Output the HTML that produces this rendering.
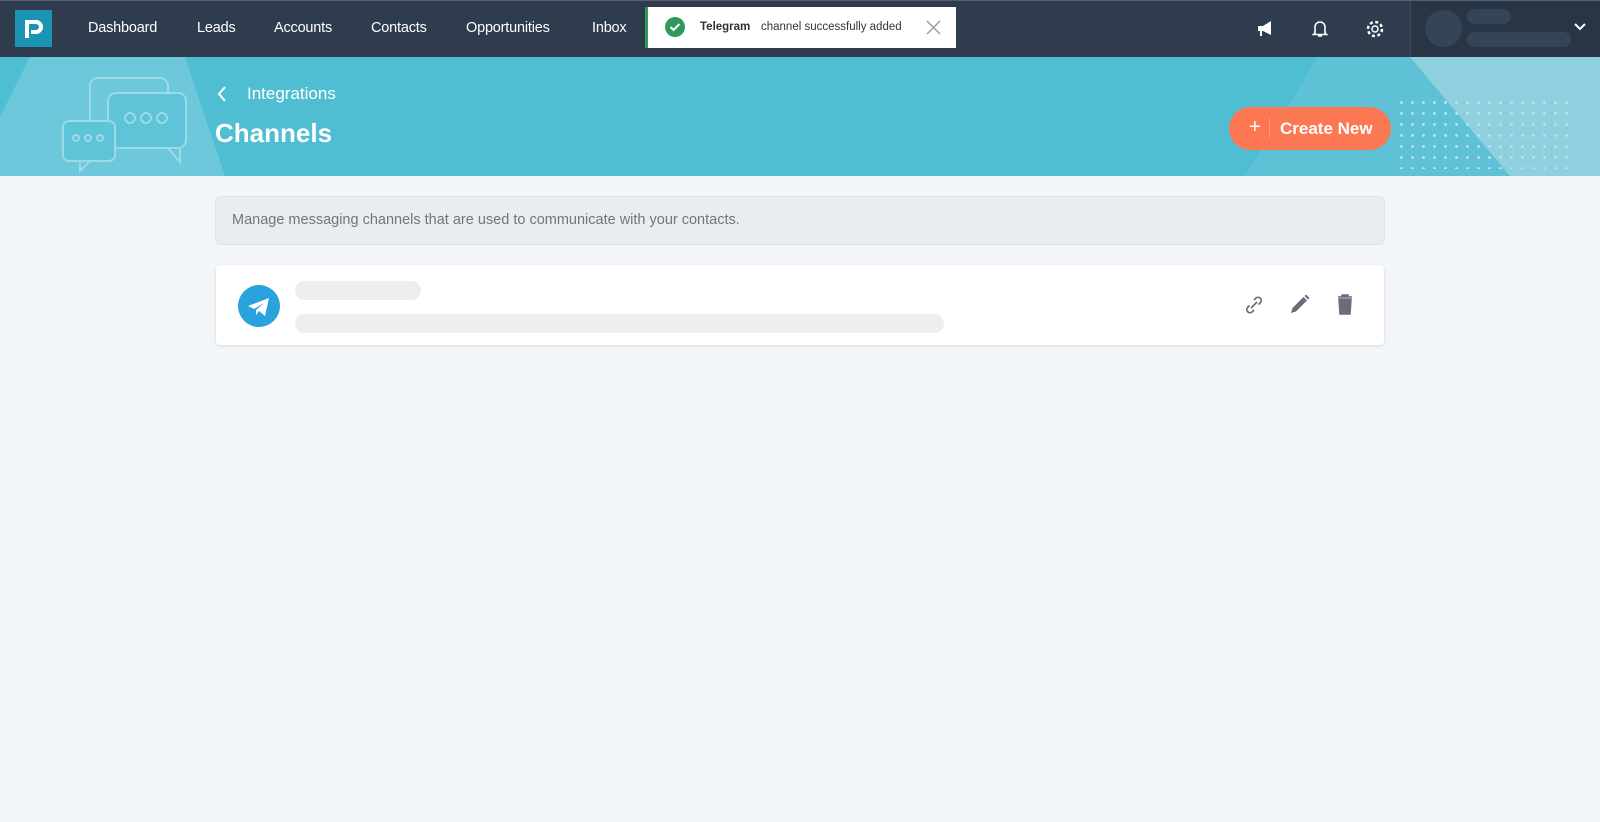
<!DOCTYPE html>
<html><head><meta charset="utf-8"><style>
*{box-sizing:border-box;margin:0;padding:0}
body{width:1600px;height:822px;background:#f2f6f9;font-family:"Liberation Sans",sans-serif;position:relative;overflow:hidden}
.nav{position:absolute;left:0;top:0;width:1600px;height:57px;background:#2e3c4e;border-top:1px solid #55606c}
.nav a{position:absolute;top:19px;color:#fff;font-size:14.5px;letter-spacing:-0.2px}
.logo{position:absolute;left:15px;top:9px;width:37px;height:37px;background:#1b93b3}
.user{position:absolute;left:1410px;top:0;width:190px;height:57px;background:#283545;border-left:1px solid #3e4a59}
.toast{position:absolute;left:645px;top:6px;width:311px;height:41px;background:#fff;border-left:3px solid #2f9a5a;font-size:11.5px;color:#333}
.banner{position:absolute;left:0;top:57px;width:1600px;height:119px;background:#4fbdd2;overflow:hidden}
.desc{position:absolute;left:215px;top:196px;width:1170px;height:49px;background:#e8edf1;border:1px solid #dde3e8;border-radius:6px;color:#70767d;font-size:14.5px;padding:15px 16px}
.card{position:absolute;left:216px;top:265px;width:1168px;height:80px;background:#fff;border-radius:4px;box-shadow:0 1px 3px rgba(0,0,0,.12)}
.sk{position:absolute;background:#eeeeee;border-radius:10px}
</style></head><body>
<div class="nav">
<div class="logo"><svg width="37" height="37"><path d="M12 28V12h9a5 5 0 0 1 0 10h-5" stroke="#fff" stroke-width="4" fill="none"/></svg></div>
<a style="left:88px">Dashboard</a><a style="left:197px">Leads</a><a style="left:274px">Accounts</a><a style="left:371px">Contacts</a><a style="left:466px">Opportunities</a><a style="left:592px">Inbox</a>
<div class="toast"><svg style="position:absolute;left:17px;top:10px" width="20" height="20"><circle cx="10" cy="10" r="10" fill="#2f9a5a"/><path d="M5.5 10l3 3 6-6" stroke="#fff" stroke-width="2" fill="none"/></svg><span style="position:absolute;left:52px;top:14px;font-weight:bold">Telegram</span><span style="position:absolute;left:113px;top:14px">channel successfully added</span><svg style="position:absolute;left:278px;top:13px" width="15" height="15"><path d="M1 1l13 13M14 1L1 14" stroke="#999" stroke-width="1.4"/></svg></div>
<svg style="position:absolute;left:1256px;top:19px" width="18" height="18"><path d="M2 6h5l8-5v14l-8-4H6v5H4v-5H2z" fill="#fff"/></svg>
<svg style="position:absolute;left:1311px;top:18px" width="18" height="20"><path d="M4 14V8a5 5 0 0 1 10 0v6l1.5 1.5h-13zM7 17h4" stroke="#fff" stroke-width="1.6" fill="none"/></svg>
<svg style="position:absolute;left:1365px;top:18px" width="20" height="20"><circle cx="10" cy="10" r="3" stroke="#fff" stroke-width="1.5" fill="none"/><circle cx="10" cy="10" r="7" stroke="#fff" stroke-width="2.5" stroke-dasharray="3 2.5" fill="none"/></svg>
<div class="user"><div style="position:absolute;left:14px;top:9px;width:37px;height:37px;border-radius:50%;background:#354456"></div><div style="position:absolute;left:56px;top:8px;width:44px;height:15px;border-radius:8px;background:#354456"></div><div style="position:absolute;left:56px;top:31px;width:104px;height:15px;border-radius:8px;background:#354456"></div><svg style="position:absolute;left:162px;top:21px" width="14" height="10"><path d="M2 2l5 5 5-5" stroke="#fff" stroke-width="2" fill="none"/></svg></div>
</div>
<div class="banner">
<svg width="1600" height="119" style="position:absolute;left:0;top:0">
<polygon points="30,0 185,0 225,119 0,119 0,60" fill="#6cc8da"/>
<polygon points="1245,119 1318,0 1600,0 1600,119" fill="#5fc1d6"/>
<polygon points="1410,0 1600,0 1600,119 1510,119" fill="#8fd0df"/>
<g stroke="#9dd9e6" stroke-width="2" fill="none"><rect x="90" y="21" width="78" height="55" rx="8"/><rect x="108" y="36" width="78" height="55" rx="8" fill="#5ec4d7"/><path d="M168 91l12 14v-14"/><rect x="63" y="64" width="52" height="40" rx="6" fill="#5ec4d7"/><path d="M80 104v10l10-10"/><circle cx="130" cy="61" r="5"/><circle cx="146" cy="61" r="5"/><circle cx="162" cy="61" r="5"/><circle cx="76" cy="81" r="3"/><circle cx="88" cy="81" r="3"/><circle cx="100" cy="81" r="3"/></g>
</svg>
<div style="position:absolute;left:1396px;top:40px;width:175px;height:72px;background-image:radial-gradient(circle,#b5e3ed 1.3px,transparent 1.6px);background-size:11px 11px"></div>
<svg style="position:absolute;left:216px;top:28px" width="12" height="18"><path d="M9 2L3 9l6 7" stroke="#fff" stroke-width="2" fill="none"/></svg>
<div style="position:absolute;left:247px;top:27px;color:#fff;font-size:17px">Integrations</div>
<div style="position:absolute;left:215px;top:61px;color:#fff;font-size:26px;font-weight:bold">Channels</div>
<div style="position:absolute;left:1229px;top:50px;width:162px;height:43px;border-radius:22px;background:#fb7853;color:#fff"><span style="position:absolute;left:20px;top:9px;font-size:20px">+</span><span style="position:absolute;left:40px;top:11px;width:1px;height:20px;background:#f99b80"></span><span style="position:absolute;left:51px;top:12px;font-size:17px;font-weight:bold">Create New</span></div>
</div>
<div class="desc">Manage messaging channels that are used to communicate with your contacts.</div>
<div class="card">
<svg style="position:absolute;left:22px;top:20px" width="42" height="42"><circle cx="21" cy="21" r="21" fill="#2aa2dd"/><path d="M10 21l21-8-4 18-6-5-3 4v-5l8-7-10 6z" fill="#fff"/></svg>
<div class="sk" style="left:79px;top:16px;width:126px;height:19px"></div>
<div class="sk" style="left:79px;top:49px;width:649px;height:19px"></div>
<svg style="position:absolute;left:1027px;top:29px" width="22" height="22"><path d="M8 14l6-6M6.5 11.5l-2 2a3.2 3.2 0 0 0 4.5 4.5l2-2M15.5 10.5l2-2a3.2 3.2 0 0 0-4.5-4.5l-2 2" stroke="#6b6b7a" stroke-width="1.7" fill="none"/></svg>
<svg style="position:absolute;left:1073px;top:28px" width="22" height="22"><path d="M2 20l1.5-5 11-11 3.5 3.5-11 11z M15.5 3l1.5-1.5 3.5 3.5-1.5 1.5z" fill="#6b6b7a"/></svg>
<svg style="position:absolute;left:1120px;top:28px" width="18" height="22"><path d="M2 4h14M6 4V2h6v2M3 6h12l-1 15H4z" fill="#6b6b7a" stroke="#6b6b7a" stroke-width="1.5"/></svg>
</div>
</body></html>
